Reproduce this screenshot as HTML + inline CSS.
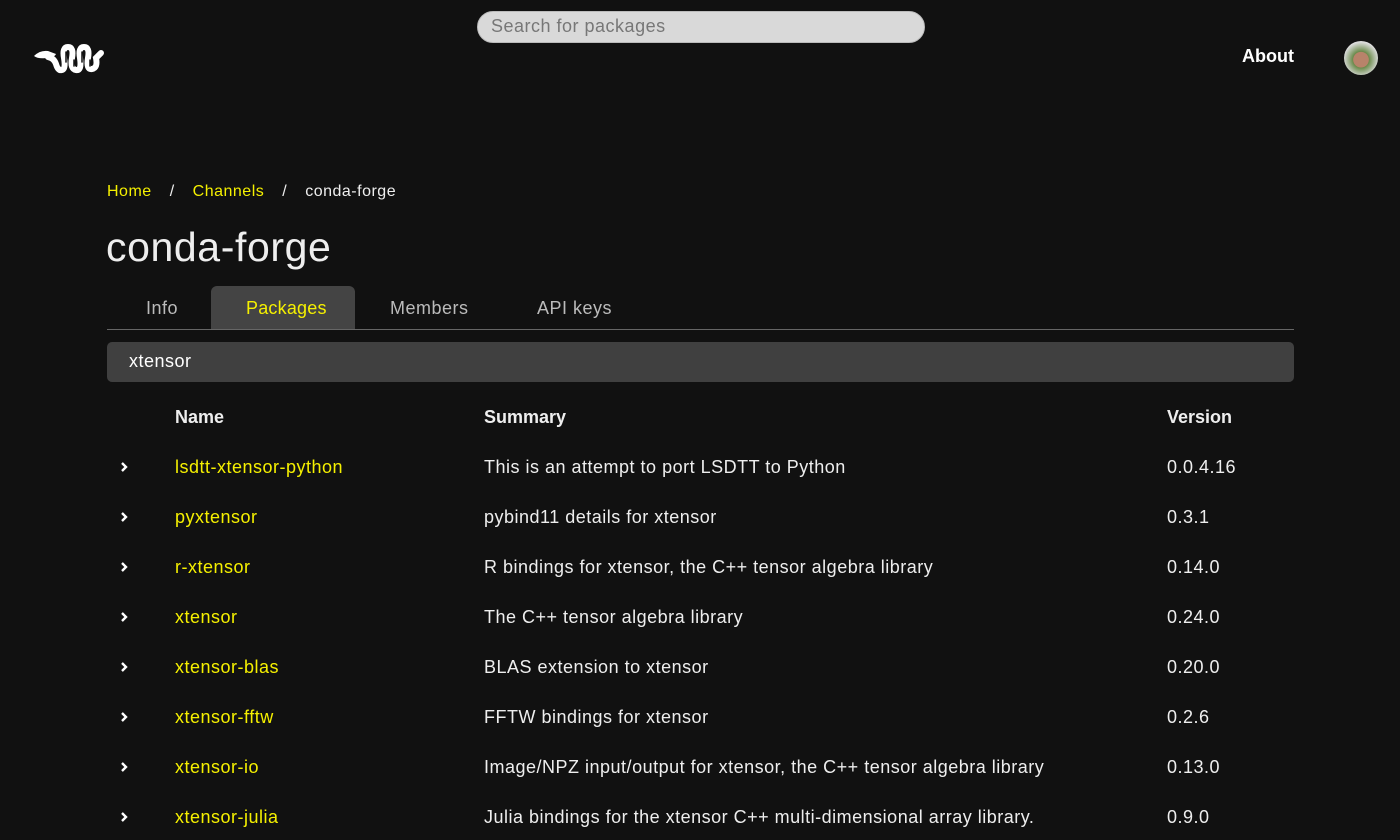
<!DOCTYPE html>
<html><head><style>
body{margin:0;width:1400px;height:840px;background:#111;overflow:hidden;font-family:"Liberation Sans",sans-serif;color:#eee;position:relative;letter-spacing:0.5px}
.a{position:absolute;white-space:nowrap}
.y{color:#f5f000}
</style></head><body>
<div class="a" style="left:477px;top:11px;width:448px;height:32px;background:#d9d9d9;border-radius:16px;border:1px solid #bbb;box-sizing:border-box"></div>
<div class="a" style="left:491px;top:16px;font-size:18px;color:#777">Search for packages</div>
<svg class="a" style="left:32px;top:42px" width="72" height="32" viewBox="0 0 72 32">
<path d="M2 14 Q8 8 16 9 L24 12 Q22 16 14 16 Q6 17 2 14Z" fill="#fff"/>
<g fill="none" stroke-linecap="round">
<path d="M16 15 Q22 16 24 22 Q26 29 30 28 Q34 27 32 16 Q30 5 36 5 Q42 5 40 16 Q38 27 44 28 Q50 29 48 16 Q46 5 52 5 Q58 5 56 16 Q54 28 60 27 Q66 26 64 16 L69 11" stroke="#fff" stroke-width="6"/>
<path d="M34 10 L34 20 M50 10 L50 20 M42 18 L42 24 M58 18 L58 24" stroke="#111" stroke-width="1.5"/>
</g></svg>
<div class="a" style="left:1242px;top:46px;font-size:18px;font-weight:bold;color:#fff;letter-spacing:0">About</div>
<div class="a" style="left:1344px;top:41px;width:34px;height:34px;border-radius:50%;background:radial-gradient(circle at 50% 55%,#b8836a 0 30%,#6a8a4a 32%,#ddd 70%)"></div>
<div class="a" style="left:107px;top:183px;font-size:16px"><span class="y">Home</span><span style="margin:0 18px">/</span><span class="y">Channels</span><span style="margin:0 18px">/</span>conda-forge</div>
<div class="a" style="left:106px;top:224px;font-size:41px;color:#eee;letter-spacing:0.6px">conda-forge</div>
<div class="a" style="left:211px;top:286px;width:144px;height:43px;background:#444;border-radius:6px 6px 0 0"></div>
<div class="a" style="left:146px;top:298px;font-size:18px;color:#bbb">Info</div>
<div class="a y" style="left:246px;top:298px;font-size:18px;letter-spacing:0.2px">Packages</div>
<div class="a" style="left:390px;top:298px;font-size:18px;color:#bbb">Members</div>
<div class="a" style="left:537px;top:298px;font-size:18px;color:#bbb">API keys</div>
<div class="a" style="left:107px;top:329px;width:1187px;height:1px;background:#666"></div>
<div class="a" style="left:107px;top:342px;width:1187px;height:40px;background:#404040;border-radius:5px"></div>
<div class="a" style="left:129px;top:351px;font-size:18px;color:#fff">xtensor</div>
<div class="a" style="left:175px;top:407px;font-size:18px;font-weight:bold;letter-spacing:0">Name</div>
<div class="a" style="left:484px;top:407px;font-size:18px;font-weight:bold;letter-spacing:0">Summary</div>
<div class="a" style="left:1167px;top:407px;font-size:18px;font-weight:bold;letter-spacing:0">Version</div>
<div id="rows"></div>
<script>
var r=[["lsdtt-xtensor-python","This is an attempt to port LSDTT to Python","0.0.4.16"],["pyxtensor","pybind11 details for xtensor","0.3.1"],["r-xtensor","R bindings for xtensor, the C++ tensor algebra library","0.14.0"],["xtensor","The C++ tensor algebra library","0.24.0"],["xtensor-blas","BLAS extension to xtensor","0.20.0"],["xtensor-fftw","FFTW bindings for xtensor","0.2.6"],["xtensor-io","Image/NPZ input/output for xtensor, the C++ tensor algebra library","0.13.0"],["xtensor-julia","Julia bindings for the xtensor C++ multi-dimensional array library.","0.9.0"]];
var h="";r.forEach(function(x,i){var t=457+i*50;
h+='<svg class="a" style="left:119px;top:'+(t+4)+'px" width="10" height="12"><path d="M3 2 L7 6 L3 10" stroke="#fff" stroke-width="2.4" fill="none"/></svg>';
h+='<div class="a y" style="left:175px;top:'+t+'px;font-size:18px">'+x[0]+'</div><div class="a" style="left:484px;top:'+t+'px;font-size:18px">'+x[1]+'</div><div class="a" style="left:1167px;top:'+t+'px;font-size:18px">'+x[2]+'</div>';});
document.getElementById("rows").innerHTML=h;
</script>
</body></html>
